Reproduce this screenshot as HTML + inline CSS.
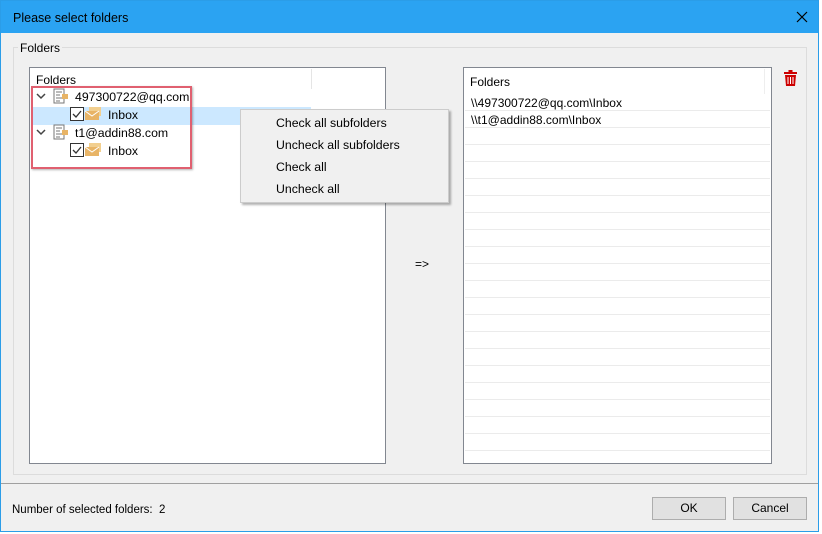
<!DOCTYPE html>
<html><head><meta charset="utf-8"><style>
*{box-sizing:border-box;margin:0;padding:0}
body{width:822px;height:534px;background:#fff;font-family:"Liberation Sans",sans-serif;font-size:12px;color:#000;position:relative;overflow:hidden}
.win{position:absolute;left:0;top:0;width:819px;height:532px;border:1px solid #2b9de8;background:#f0f0f0}
.title{position:absolute;left:0;top:0;width:817px;height:32px;background:#2ba3f2}
.title span{position:absolute;left:12px;top:10px;font-size:12.5px}
.abs{position:absolute}
.box{position:absolute;background:#fff;border:1px solid #828790}
.grp{position:absolute;left:13px;top:47px;width:794px;height:428px;border:1px solid #dcdcdc}
.menu{position:absolute;left:240px;top:109px;width:209px;height:94px;background:#f0f0f0;border:1px solid #ccc;box-shadow:2px 2px 2px rgba(0,0,0,.3)}
.menu div{position:absolute;left:35px;font-size:12.3px}
.btn{position:absolute;top:497px;height:23px;width:74px;border:1px solid #adadad;background:#e1e1e1;text-align:center;line-height:21px;font-size:12px}
</style></head><body>
<div class="win">
 <div class="title"><span>Please select folders</span>
  <svg class="abs" style="left:795px;top:10px" width="12" height="12"><path d="M1 1L11 11M11 1L1 11" stroke="#000" stroke-width="1.2"/></svg>
 </div>
</div>
<div class="grp"></div>
<div class="abs" style="left:18px;top:41px;background:#f0f0f0;padding:0 2px">Folders</div>

<div class="box" style="left:29px;top:67px;width:357px;height:397px">
 <div class="abs" style="left:6px;top:5px">Folders</div>
 <div class="abs" style="left:281px;top:1px;width:1px;height:20px;background:#e5e5e5"></div>
 <div class="abs" style="left:1px;top:39px;width:280px;height:18px;background:#cce8ff"></div>
</div>
<svg class="abs" style="left:36px;top:93px" width="12" height="8"><path d="M1 1L5 5L9 1" fill="none" stroke="#444" stroke-width="1.5"/></svg>
<svg class="abs" style="left:36px;top:129px" width="12" height="8"><path d="M1 1L5 5L9 1" fill="none" stroke="#444" stroke-width="1.5"/></svg>
<svg class="abs" style="left:53px;top:88px" width="16" height="16"><rect x="1" y="1" width="10" height="14" fill="#fff" stroke="#777"/><path d="M3 4h6M3 7h4M3 10h6M3 13h4" stroke="#777"/><rect x="9" y="6" width="6" height="5" fill="#e8b466"/></svg>
<svg class="abs" style="left:53px;top:124px" width="16" height="16"><rect x="1" y="1" width="10" height="14" fill="#fff" stroke="#777"/><path d="M3 4h6M3 7h4M3 10h6M3 13h4" stroke="#777"/><rect x="9" y="6" width="6" height="5" fill="#e8b466"/></svg>
<div class="abs" style="left:75px;top:90px;font-size:12.3px">497300722@qq.com</div>
<div class="abs" style="left:75px;top:126px;font-size:12.3px">t1@addin88.com</div>
<svg class="abs" style="left:70px;top:107px" width="14" height="14"><rect x=".5" y=".5" width="13" height="13" fill="#fff" stroke="#333"/><path d="M3 7l3 3 5-6" fill="none" stroke="#333" stroke-width="1.3"/></svg>
<svg class="abs" style="left:70px;top:143px" width="14" height="14"><rect x=".5" y=".5" width="13" height="13" fill="#fff" stroke="#333"/><path d="M3 7l3 3 5-6" fill="none" stroke="#333" stroke-width="1.3"/></svg>
<svg class="abs" style="left:85px;top:106px" width="17" height="15"><rect x="4" y="1" width="12" height="9" fill="#f2cf8f"/><rect x="0" y="5" width="14" height="9" fill="#e8b466"/><path d="M0 5l7 5 7-5" fill="none" stroke="#fff"/></svg>
<svg class="abs" style="left:85px;top:142px" width="17" height="15"><rect x="4" y="1" width="12" height="9" fill="#f2cf8f"/><rect x="0" y="5" width="14" height="9" fill="#e8b466"/><path d="M0 5l7 5 7-5" fill="none" stroke="#fff"/></svg>
<div class="abs" style="left:108px;top:108px;font-size:12.3px">Inbox</div>
<div class="abs" style="left:108px;top:144px;font-size:12.3px">Inbox</div>
<div class="abs" style="left:31px;top:86px;width:161px;height:83px;border:2px solid #e06070;box-shadow:1px 1px 2px rgba(0,0,0,.3)"></div>

<div class="menu">
 <div style="top:6px">Check all subfolders</div>
 <div style="top:28px">Uncheck all subfolders</div>
 <div style="top:50px">Check all</div>
 <div style="top:72px">Uncheck all</div>
</div>

<div class="abs" style="left:415px;top:257px">=&gt;</div>

<div class="box" style="left:463px;top:67px;width:309px;height:397px;overflow:hidden">
 <div class="abs" style="left:6px;top:7px">Folders</div>
 <div class="abs" style="left:300px;top:1px;width:1px;height:395px;background:#eee"></div>
 <div class="abs" style="left:1px;top:26px;right:1px;height:370px;background:repeating-linear-gradient(#fff 0,#fff 16px,#ebebeb 16px,#ebebeb 17px)"></div>
 <div class="abs" style="left:7px;top:28px">\\497300722@qq.com\Inbox</div>
 <div class="abs" style="left:7px;top:45px">\\t1@addin88.com\Inbox</div>
</div>
<svg class="abs" style="left:783px;top:70px" width="16" height="17"><rect x="1" y="2" width="13" height="2" fill="#c00"/><rect x="5.5" y="0" width="4" height="2.5" fill="#c00"/><path d="M2 5h11l-1 11H3z" fill="#c00"/><path d="M5 7v7M7.5 7v7M10 7v7" stroke="#fff" stroke-width="1"/></svg>

<div class="abs" style="left:1px;top:483px;width:817px;height:1px;background:#a0a0a0"></div>
<div class="abs" style="left:12px;top:504px;font-size:11.5px">Number of selected folders:&nbsp; 2</div>
<div class="btn" style="left:652px">OK</div>
<div class="btn" style="left:733px">Cancel</div>
</body></html>
